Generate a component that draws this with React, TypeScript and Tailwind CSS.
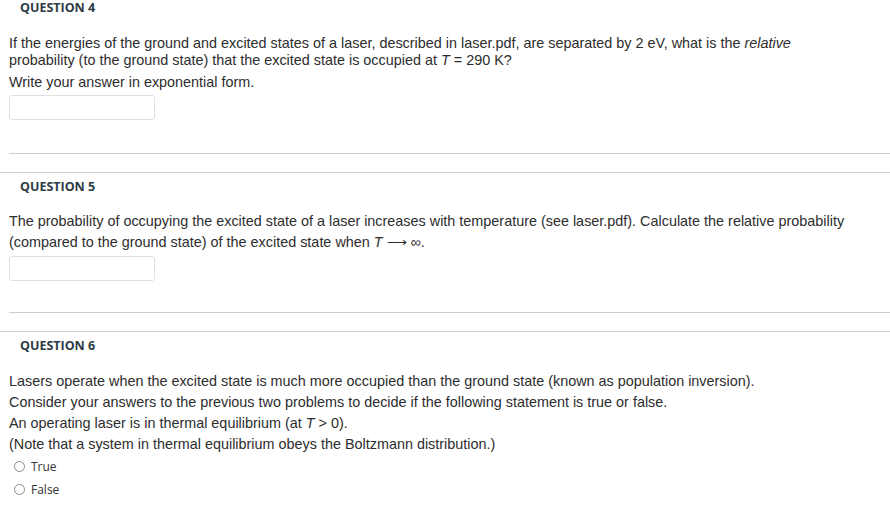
const body = "font-['Liberation_Sans',Arial,sans-serif] text-[14.4px] text-[#2d2d2d]";

const Header = ({ n }: { n: number }) => (
  <div className="pl-5 h-4 leading-4 text-[12.5px] font-bold text-[#2d3b45] font-['Open_Sans',sans-serif]">
    QUESTION {n}
  </div>
);

const AnswerBox = () => (
  <div className="ml-[9px] w-[146px] h-[25px] rounded-[3px] border border-[#e0e0e0] bg-white" />
);

const Divider = () => (
  <>
    <div className="ml-[9px] border-t border-[#cfcfcf]" />
    <div className="mt-[18px] border-t border-[#cfcfcf]" />
  </>
);

const Radio = ({ label }: { label: string }) => (
  <label className="flex items-center h-[23px] pl-[14px] gap-[6px] text-[12px] text-[#333] font-['Open_Sans',sans-serif]">
    <span className="w-[11px] h-[11px] rounded-full border border-[#8a8a8a] bg-white" />
    {label}
  </label>
);

export default function App() {
  return (
    <div className="w-[890px] h-[523px] bg-white overflow-hidden">
      <Header n={4} />
      <div className={`${body} pl-[9px] mt-[19px] leading-[17px]`}>
        If the energies of the ground and excited states of a laser, described in laser.pdf, are separated by 2 eV, what is the <i>relative</i>
        <br />
        probability (to the ground state) that the excited state is occupied at <i>T</i> = 290 K?
      </div>
      <div className={`${body} pl-[9px] mt-[3px] leading-[21px]`}>Write your answer in exponential form.</div>
      <div className="mt-[2px]">
        <AnswerBox />
      </div>
      <div className="mt-[33px]">
        <Divider />
      </div>

      <div className="mt-[6px]">
        <Header n={5} />
      </div>
      <div className={`${body} pl-[9px] mt-[16px] leading-[21px]`}>
        The probability of occupying the excited state of a laser increases with temperature (see laser.pdf). Calculate the relative probability
        <br />
        (compared to the ground state) of the excited state when <i>T</i> ⟶ ∞.
      </div>
      <div className="mt-[3px]">
        <AnswerBox />
      </div>
      <div className="mt-[31px]">
        <Divider />
      </div>

      <div className="mt-[6px]">
        <Header n={6} />
      </div>
      <div className={`${body} pl-[9px] mt-[17px] leading-[21px]`}>
        <div>Lasers operate when the excited state is much more occupied than the ground state (known as population inversion).</div>
        <div>Consider your answers to the previous two problems to decide if the following statement is true or false.</div>
        <div>
          An operating laser is in thermal equilibrium (at <i>T</i> &gt; 0).
        </div>
        <div>(Note that a system in thermal equilibrium obeys the Boltzmann distribution.)</div>
      </div>
      <Radio label="True" />
      <Radio label="False" />
    </div>
  );
}
